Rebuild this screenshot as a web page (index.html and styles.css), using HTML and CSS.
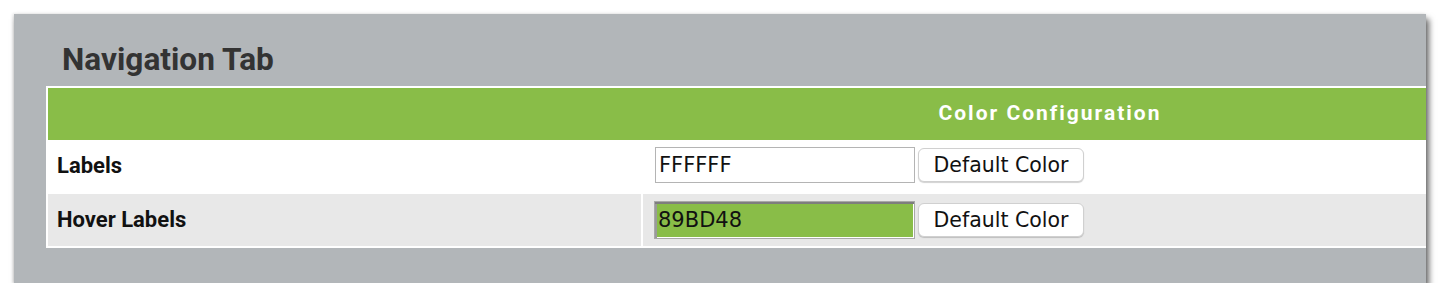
FILE: index.html
```html
<!DOCTYPE html>
<html>
<head>
<meta charset="utf-8">
<link rel="stylesheet" href="styles.css">
</head>
<body>
<div class="panel">
  <h2 class="title">Navigation Tab</h2>
  <div class="table">
    <div class="head">
      <div></div>
      <div class="head-text">Color Configuration</div>
    </div>
    <div class="cell label row1">Labels</div>
    <div class="cell value row1">
      <input class="color-input" type="text" value="FFFFFF">
      <button class="btn">Default Color</button>
    </div>
    <div class="cell label row2">Hover Labels</div>
    <div class="cell value row2">
      <input class="color-input active" type="text" value="89BD48">
      <button class="btn">Default Color</button>
    </div>
  </div>
</div>
</body>
</html>
```
FILE: styles.css
```css
html, body {
  margin: 0;
  padding: 0;
  background: #ffffff;
}
.panel {
  margin: 14px 0 0 14px;
  width: 1412px;
  height: 269px;
  box-sizing: border-box;
  padding-top: 28px;
  background: #b2b6b9;
  box-shadow: 3px 5px 6px rgba(0,0,0,0.6), -1px 0 3px rgba(0,0,0,0.15);
  overflow: hidden;
}
.title {
  margin: 0 0 8px 48px;
  font-family: Roboto, "Liberation Sans", sans-serif;
  font-weight: 700;
  font-size: 31.6px;
  line-height: 36px;
  color: #333333;
}
.table {
  margin-left: 32px;
  width: 1413px;
  box-sizing: border-box;
  background: #ffffff;
  padding: 2px;
  display: grid;
  grid-template-columns: 593px 1fr;
  grid-template-rows: 52px 50px 52px;
  gap: 2px;
}
.head {
  grid-column: 1 / -1;
  background: #89bd48;
  display: grid;
  grid-template-columns: 595px 1fr;
  align-items: center;
}
.head-text {
  text-align: center;
  color: #ffffff;
  font-family: Roboto, "Liberation Sans", sans-serif;
  font-weight: 700;
  font-size: 21px;
  letter-spacing: 2px;
  padding-bottom: 3px;
}
.cell {
  display: flex;
  align-items: center;
}
.row1 { background: #ffffff; }
.row2 { background: #e8e8e8; }
.label {
  padding-left: 9px;
  font-family: Roboto, "Liberation Sans", sans-serif;
  font-weight: 700;
  font-size: 22px;
  color: #111111;
}
.label.row1 { padding-bottom: 4px; }
.label.row2 { padding-bottom: 2px; }
.value {
  padding-left: 12px;
  gap: 3px;
}
.value.row1 { padding-bottom: 4px; }
.color-input {
  width: 260px;
  height: 36px;
  box-sizing: border-box;
  border: 1px solid #b4b4b4;
  padding: 0 0 0 3px;
  margin: 0;
  font-family: "DejaVu Sans", sans-serif;
  font-size: 21px;
  color: #111111;
  background: #ffffff;
  outline: none;
}
.color-input.active {
  height: 38px;
  margin-left: -1px;
  width: 261px;
  background: #89bd48;
  border: 1px solid #a8a8a8;
  box-shadow: inset 0 2px 0 #7e7e7e, inset 2px 0 0 #9a9a9a, inset -1px -1px 0 #ffffff;
  padding-left: 3px;
}
.btn {
  width: 166px;
  height: 34px;
  box-sizing: border-box;
  border: 1px solid #d0d0d0;
  border-radius: 6px;
  background: #ffffff;
  box-shadow: 0 1px 1px rgba(0,0,0,0.18);
  font-family: "DejaVu Sans", sans-serif;
  font-size: 20.5px;
  color: #111111;
  padding: 0;
  margin: 0;
}
```
